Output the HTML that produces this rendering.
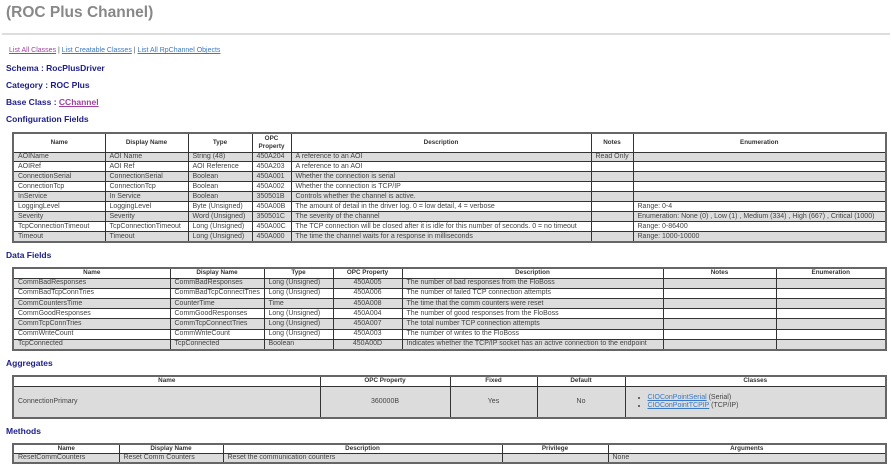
<!DOCTYPE html>
<html><head><meta charset="utf-8"><style>
*{margin:0;padding:0;box-sizing:border-box}
body{width:892px;height:471px;background:#fff;font-family:"Liberation Sans",sans-serif;position:relative;overflow:hidden;color:#444}
.title{position:absolute;left:6px;top:4px;font-size:15.5px;font-weight:bold;color:#888}
.hr{position:absolute;left:2px;top:33px;width:888px;height:2px;background:#ddd}
.links{position:absolute;left:9px;top:47px;font-size:7px;color:#555}
.links a{color:#3a78c8;text-decoration:underline}
.links a.v{color:#a040a0}
h3{position:absolute;left:6px;font-size:8.5px;font-weight:bold;color:#1c1c8c}
h3 a{color:#a040a0;text-decoration:underline}
table{position:absolute;left:12px;width:875px;border-collapse:collapse;table-layout:fixed;font-size:7px;border:2px solid #666}
td,th{border:1px solid #333;padding:0 4px;white-space:nowrap;overflow:hidden;line-height:8px}
th{background:#fff;font-weight:bold;text-align:center;color:#333;font-size:6.3px}
tr.g td{background:#dcdcdc}
tr.w td{background:#fff}
.c{text-align:center}
ul{list-style:disc;padding-left:18px}
ul a{color:#3a78c8;text-decoration:underline}
</style></head><body>
<div class="title">(ROC Plus Channel)</div>
<div class="hr"></div>
<div class="links"><a class="v">List All Classes</a> | <a>List Creatable Classes</a> | <a>List All RpChannel Objects</a></div>
<h3 style="top:63px">Schema : RocPlusDriver</h3>
<h3 style="top:80px">Category : ROC Plus</h3>
<h3 style="top:97px">Base Class : <a>CChannel</a></h3>
<h3 style="top:114px">Configuration Fields</h3>
<table style="top:132px;height:111px">
<colgroup><col style="width:92px"><col style="width:83px"><col style="width:64px"><col style="width:39px"><col style="width:300px"><col style="width:42px"><col></colgroup>
<tr style="height:19px"><th>Name</th><th>Display Name</th><th>Type</th><th>OPC<br>Property</th><th>Description</th><th>Notes</th><th>Enumeration</th></tr>
<tr class="g"><td>AOIName</td><td>AOI Name</td><td>String (48)</td><td>450A204</td><td>A reference to an AOI</td><td class="c">Read Only</td><td></td></tr>
<tr class="w"><td>AOIRef</td><td>AOI Ref</td><td>AOI Reference</td><td>450A203</td><td>A reference to an AOI</td><td></td><td></td></tr>
<tr class="g"><td>ConnectionSerial</td><td>ConnectionSerial</td><td>Boolean</td><td>450A001</td><td>Whether the connection is serial</td><td></td><td></td></tr>
<tr class="w"><td>ConnectionTcp</td><td>ConnectionTcp</td><td>Boolean</td><td>450A002</td><td>Whether the connection is TCP/IP</td><td></td><td></td></tr>
<tr class="g"><td>InService</td><td>In Service</td><td>Boolean</td><td>350501B</td><td>Controls whether the channel is active.</td><td></td><td></td></tr>
<tr class="w"><td>LoggingLevel</td><td>LoggingLevel</td><td>Byte (Unsigned)</td><td>450A00B</td><td>The amount of detail in the driver log. 0 = low detail, 4 = verbose</td><td></td><td>Range: 0-4</td></tr>
<tr class="g"><td>Severity</td><td>Severity</td><td>Word (Unsigned)</td><td>350501C</td><td>The severity of the channel</td><td></td><td>Enumeration: None (0) , Low (1) , Medium (334) , High (667) , Critical (1000)</td></tr>
<tr class="w"><td>TcpConnectionTimeout</td><td>TcpConnectionTimeout</td><td>Long (Unsigned)</td><td>450A00C</td><td>The TCP connection will be closed after it is idle for this number of seconds. 0 = no timeout</td><td></td><td>Range: 0-86400</td></tr>
<tr class="g"><td>Timeout</td><td>Timeout</td><td>Long (Unsigned)</td><td>450A000</td><td>The time the channel waits for a response in milliseconds</td><td></td><td>Range: 1000-10000</td></tr>
</table>
<h3 style="top:250px">Data Fields</h3>
<table style="top:267px;height:84px">
<colgroup><col style="width:157px"><col style="width:94px"><col style="width:69px"><col style="width:69px"><col style="width:261px"><col style="width:113px"><col></colgroup>
<tr style="height:10px"><th>Name</th><th>Display Name</th><th>Type</th><th>OPC Property</th><th>Description</th><th>Notes</th><th>Enumeration</th></tr>
<tr class="g"><td>CommBadResponses</td><td>CommBadResponses</td><td>Long (Unsigned)</td><td class="c">450A005</td><td>The number of bad responses from the FloBoss</td><td></td><td></td></tr>
<tr class="w"><td>CommBadTcpConnTries</td><td>CommBadTcpConnectTries</td><td>Long (Unsigned)</td><td class="c">450A006</td><td>The number of failed TCP connection attempts</td><td></td><td></td></tr>
<tr class="g"><td>CommCountersTime</td><td>CounterTime</td><td>Time</td><td class="c">450A008</td><td>The time that the comm counters were reset</td><td></td><td></td></tr>
<tr class="w"><td>CommGoodResponses</td><td>CommGoodResponses</td><td>Long (Unsigned)</td><td class="c">450A004</td><td>The number of good responses from the FloBoss</td><td></td><td></td></tr>
<tr class="g"><td>CommTcpConnTries</td><td>CommTcpConnectTries</td><td>Long (Unsigned)</td><td class="c">450A007</td><td>The total number TCP connection attempts</td><td></td><td></td></tr>
<tr class="w"><td>CommWriteCount</td><td>CommWriteCount</td><td>Long (Unsigned)</td><td class="c">450A003</td><td>The number of writes to the FloBoss</td><td></td><td></td></tr>
<tr class="g"><td>TcpConnected</td><td>TcpConnected</td><td>Boolean</td><td class="c">450A00D</td><td>Indicates whether the TCP/IP socket has an active connection to the endpoint</td><td></td><td></td></tr>
</table>
<h3 style="top:358px">Aggregates</h3>
<table style="top:375px;height:44px">
<colgroup><col style="width:307px"><col style="width:130px"><col style="width:87px"><col style="width:88px"><col></colgroup>
<tr style="height:10px"><th>Name</th><th>OPC Property</th><th>Fixed</th><th>Default</th><th>Classes</th></tr>
<tr class="g"><td>ConnectionPrimary</td><td class="c">360000B</td><td class="c">Yes</td><td class="c">No</td><td><ul><li><a>CIOConPointSerial</a> (Serial)</li><li><a>CIOConPointTCPIP</a> (TCP/IP)</li></ul></td></tr>
</table>
<h3 style="top:426px">Methods</h3>
<table style="top:443px;height:20px">
<colgroup><col style="width:106px"><col style="width:104px"><col style="width:279px"><col style="width:106px"><col></colgroup>
<tr style="height:9px"><th>Name</th><th>Display Name</th><th>Description</th><th>Privilege</th><th>Arguments</th></tr>
<tr class="g"><td>ResetCommCounters</td><td>Reset Comm Counters</td><td>Reset the communication counters</td><td></td><td>None</td></tr>
</table>
</body></html>
